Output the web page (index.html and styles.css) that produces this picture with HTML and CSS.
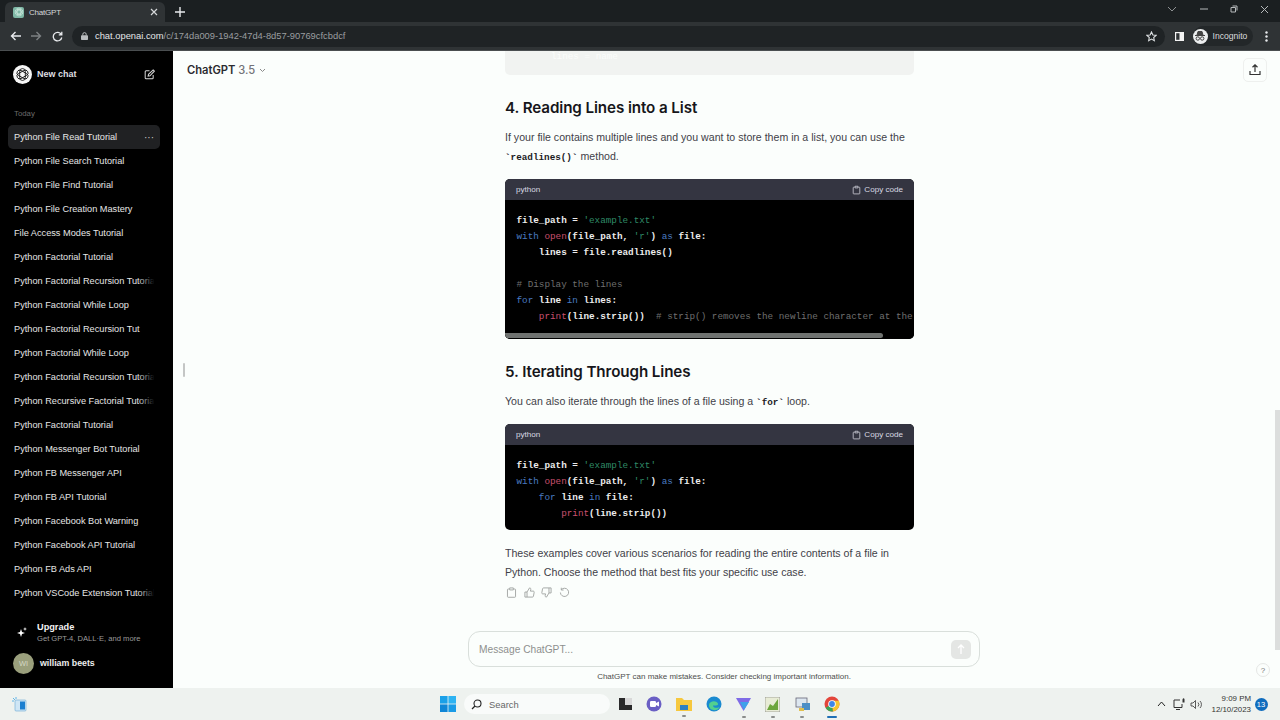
FILE: index.html
```html
<!DOCTYPE html>
<html lang="en">
<head>
<meta charset="utf-8">
<title>ChatGPT</title>
<link rel="stylesheet" href="styles.css">
</head>
<body>
<svg class="defs" width="0" height="0" aria-hidden="true">
  <symbol id="clip" viewBox="0 0 12 12"><path d="M3.5 2.2H2.4a.8.8 0 0 0-.8.8v7.4a.8.8 0 0 0 .8.8h7.2a.8.8 0 0 0 .8-.8V3a.8.8 0 0 0-.8-.8H8.5M4 1h4v2.2H4z" fill="none" stroke="currentColor" stroke-width="1"/></symbol>
  <symbol id="knot" viewBox="0 0 24 24"><g fill="none" stroke="currentColor" stroke-width="1.4"><rect x="7.5" y="2.5" width="9" height="19" rx="4.5"/><rect x="7.5" y="2.5" width="9" height="19" rx="4.5" transform="rotate(60 12 12)"/><rect x="7.5" y="2.5" width="9" height="19" rx="4.5" transform="rotate(120 12 12)"/></g></symbol>
</svg>

<header class="tabstrip">
  <div class="tab">
    <span class="favicon"><svg width="10" height="10"><use href="#knot"/></svg></span>
    <span class="tab-title">ChatGPT</span>
    <svg class="tab-close" width="8" height="8" viewBox="0 0 8 8"><path d="M1 1l6 6M7 1L1 7" stroke="currentColor" stroke-width="1.2"/></svg>
  </div>
  <svg class="newtab" width="10" height="10" viewBox="0 0 10 10"><path d="M5 0v10M0 5h10" stroke="currentColor" stroke-width="1.4"/></svg>
  <div class="winctl">
    <svg width="10" height="6" viewBox="0 0 10 6"><path d="M1 1l4 4 4-4" fill="none" stroke="currentColor"/></svg>
    <svg width="8" height="2" viewBox="0 0 8 2"><path d="M0 1h8" stroke="currentColor"/></svg>
    <svg width="8" height="8" viewBox="0 0 8 8"><path d="M1 2.500h4.500v4.500H1zM2.500 1H7v4.500" fill="none" stroke="currentColor"/></svg>
    <svg width="9" height="9" viewBox="0 0 9 9"><path d="M1 1l7 7M8 1L1 8" stroke="currentColor"/></svg>
  </div>
</header>

<nav class="toolbar">
  <svg class="nav" width="11" height="10" viewBox="0 0 11 10"><path d="M11 5H1.500M5.500 1L1.500 5l4 4" fill="none" stroke="currentColor" stroke-width="1.400"/></svg>
  <svg class="nav nav-off" width="11" height="10" viewBox="0 0 11 10"><path d="M0 5h9.500M5.500 1l4 4-4 4" fill="none" stroke="currentColor" stroke-width="1.400"/></svg>
  <svg class="nav nav-last" width="11" height="11" viewBox="0 0 11 11"><path d="M9.300 3.400A4.300 4.300 0 1 0 9.800 6.500M9.800 .8v3H6.800" fill="none" stroke="currentColor" stroke-width="1.300"/></svg>
  <div class="urlbar">
    <svg class="lock" width="7" height="8" viewBox="0 0 7 8"><path d="M1.800 3.500V2.300a1.700 1.700 0 0 1 3.400 0v1.200" fill="none" stroke="currentColor"/><rect y="3.200" width="7" height="4.800" rx=".8" fill="currentColor"/></svg>
    <span class="url"><b>chat.openai.com</b>/c/174da009-1942-47d4-8d57-90769cfcbdcf</span>
    <svg class="star" width="11" height="11" viewBox="0 0 12 12"><path d="M6 1l1.500 3.300 3.500.4-2.600 2.400.7 3.500L6 8.800l-3.100 1.800.7-3.500L1 4.700l3.500-.4z" fill="none" stroke="currentColor" stroke-width="1.200"/></svg>
  </div>
  <svg class="panel" width="9" height="9" viewBox="0 0 9 9"><path d="M0 0h9v9H0z" fill="#f4f4f4"/><path d="M1.200 1.200h3.300v6.600H1.200z" fill="#2f3335"/></svg>
  <div class="incog">
    <span class="incog-icon"><svg width="12" height="12" viewBox="0 0 12 12"><path d="M1 5.500h10M3 5l1-3.500h4L9 5" fill="#444" stroke="#444"/><circle cx="3.800" cy="8.500" r="1.700" fill="none" stroke="#444"/><circle cx="8.200" cy="8.500" r="1.700" fill="none" stroke="#444"/></svg></span>
    <span>Incognito</span>
  </div>
  <svg class="kebab" width="3" height="11" viewBox="0 0 3 11"><circle cx="1.500" cy="1.500" r="1.200" fill="currentColor"/><circle cx="1.500" cy="5.500" r="1.200" fill="currentColor"/><circle cx="1.500" cy="9.500" r="1.200" fill="currentColor"/></svg>
</nav>

<div class="app">
  <aside class="sidebar">
    <div class="newchat">
      <span class="logo"><svg width="15" height="15"><use href="#knot"/></svg></span>
      <span class="newchat-label">New chat</span>
      <svg class="edit" width="11" height="11" viewBox="0 0 12 12"><path d="M6 2H2.300a1 1 0 0 0-1 1v6.700a1 1 0 0 0 1 1H9a1 1 0 0 0 1-1V6.500M4.500 7.800l.4-2L10 1l1.300 1.300-4.800 5.100z" fill="none" stroke="currentColor" stroke-width="1.100"/></svg>
    </div>
    <div class="today">Today</div>
    <ul class="chats">
      <li class="chat active"><span>Python File Read Tutorial</span><em>···</em></li>
      <li class="chat"><span>Python File Search Tutorial</span></li>
      <li class="chat"><span>Python File Find Tutorial</span></li>
      <li class="chat"><span>Python File Creation Mastery</span></li>
      <li class="chat"><span>File Access Modes Tutorial</span></li>
      <li class="chat"><span>Python Factorial Tutorial</span></li>
      <li class="chat fade"><span>Python Factorial Recursion Tutorial</span></li>
      <li class="chat"><span>Python Factorial While Loop</span></li>
      <li class="chat"><span>Python Factorial Recursion Tut</span></li>
      <li class="chat"><span>Python Factorial While Loop</span></li>
      <li class="chat fade"><span>Python Factorial Recursion Tutorial</span></li>
      <li class="chat fade"><span>Python Recursive Factorial Tutorial</span></li>
      <li class="chat"><span>Python Factorial Tutorial</span></li>
      <li class="chat"><span>Python Messenger Bot Tutorial</span></li>
      <li class="chat"><span>Python FB Messenger API</span></li>
      <li class="chat"><span>Python FB API Tutorial</span></li>
      <li class="chat"><span>Python Facebook Bot Warning</span></li>
      <li class="chat"><span>Python Facebook API Tutorial</span></li>
      <li class="chat"><span>Python FB Ads API</span></li>
      <li class="chat fade"><span>Python VSCode Extension Tutorial</span></li>
    </ul>
    <div class="upgrade">
      <svg class="spark" width="10" height="10" viewBox="0 0 10 10"><path d="M4 2l1 3 3 1-3 1-1 3-1-3-3-1 3-1zM8 0l.5 1.500L10 2l-1.500.5L8 4l-.5-1.500L6 2l1.500-.5z" fill="#fff"/></svg>
      <div class="upgrade-text"><strong>Upgrade</strong><small>Get GPT-4, DALL·E, and more</small></div>
    </div>
    <div class="user"><span class="avatar">WI</span><span class="username">william beets</span></div>
  </aside>

  <main class="main">
    <div class="topbar">
      <div class="model">ChatGPT <span>3.5</span>
        <svg width="7" height="5" viewBox="0 0 7 5"><path d="M1 1l2.500 2.500L6 1" fill="none" stroke="currentColor"/></svg>
      </div>
      <button class="share" type="button"><svg width="12" height="12" viewBox="0 0 12 12"><path d="M6 8V1M3.500 3.200L6 .8l2.500 2.400M1 7v3.500h10V7" fill="none" stroke="currentColor" stroke-width="1.200"/></svg></button>
    </div>
    <span class="handle"></span>
    <span class="thumb"></span>
    <button class="help" type="button">?</button>

    <div class="thread">
      <div class="ghost"><span>lines = name</span></div>
      <h3>4. Reading Lines into a List</h3>
      <p>If your file contains multiple lines and you want to store them in a list, you can use the <code>`readlines()`</code> method.</p>
      <div class="code">
        <div class="code-head"><span>python</span><span class="copy"><svg width="9" height="10"><use href="#clip"/></svg>Copy code</span></div>
        <pre class="code-body"><span class="s-white">file_path = </span><span class="s-str">'example.txt'</span>
<span class="s-kw">with</span> <span class="s-fn">open</span><span class="s-white">(file_path, </span><span class="s-str">'r'</span><span class="s-white">)</span> <span class="s-kw">as</span> <span class="s-white">file:
    lines = file.readlines()</span>

<span class="s-com"># Display the lines</span>
<span class="s-kw">for</span> <span class="s-white">line</span> <span class="s-kw">in</span> <span class="s-white">lines:
    </span><span class="s-fn">print</span><span class="s-white">(line.strip())</span>  <span class="s-com"># strip() removes the newline character at the end</span></pre>
        <div class="hscroll"><span></span></div>
      </div>
      <h3>5. Iterating Through Lines</h3>
      <p>You can also iterate through the lines of a file using a <code>`for`</code> loop.</p>
      <div class="code">
        <div class="code-head"><span>python</span><span class="copy"><svg width="9" height="10"><use href="#clip"/></svg>Copy code</span></div>
        <pre class="code-body short"><span class="s-white">file_path = </span><span class="s-str">'example.txt'</span>
<span class="s-kw">with</span> <span class="s-fn">open</span><span class="s-white">(file_path, </span><span class="s-str">'r'</span><span class="s-white">)</span> <span class="s-kw">as</span> <span class="s-white">file:
    </span><span class="s-kw">for</span> <span class="s-white">line</span> <span class="s-kw">in</span> <span class="s-white">file:
        </span><span class="s-fn">print</span><span class="s-white">(line.strip())</span></pre>
      </div>
      <p class="closing">These examples cover various scenarios for reading the entire contents of a file in Python. Choose the method that best fits your specific use case.</p>
      <div class="actions">
        <svg width="11" height="11"><use href="#clip"/></svg>
        <svg width="11" height="11" viewBox="0 0 12 12"><path d="M1 5.500h2.300V11H1zM3.300 5.500L6 1c1.200 0 1.600.8 1.400 1.800L7 4.500h3.200c.7 0 1 .6.900 1.200l-.8 4.300c-.1.600-.5 1-1.100 1H3.300" fill="none" stroke="currentColor"/></svg>
        <svg width="11" height="11" viewBox="0 0 12 12"><path d="M11 6.500H8.700V1H11zM8.700 6.500L6 11c-1.200 0-1.600-.8-1.400-1.800L5 7.500H1.800c-.7 0-1-.6-.9-1.200l.8-4.300c.1-.6.500-1 1.100-1h5.900" fill="none" stroke="currentColor"/></svg>
        <svg width="11" height="11" viewBox="0 0 12 12"><path d="M2.500 3A4.500 4.500 0 1 1 1.500 6M2.500 .8V3.300H5" fill="none" stroke="currentColor"/></svg>
      </div>
    </div>

    <div class="composer">
      <span class="placeholder">Message ChatGPT...</span>
      <span class="send"><svg width="8" height="10" viewBox="0 0 8 10"><path d="M4 10V1M1 4l3-3 3 3" fill="none" stroke="#fff" stroke-width="1.300"/></svg></span>
    </div>
    <div class="disclaimer">ChatGPT can make mistakes. Consider checking important information.</div>
  </main>
</div>

<footer class="taskbar">
  <svg class="widgets" width="16" height="15" viewBox="0 0 16 15"><rect x="3" y="3" width="11" height="11" rx="1" fill="#cfe6f5" stroke="#6aa9d4" stroke-width=".6"/><rect x="8" y="4.500" width="5" height="8" fill="#1b7fd0"/><path d="M1 1l2 2M4 0v2M0 4h2" stroke="#3ba4e6" stroke-width=".8"/></svg>
  <div class="task-center">
    <svg width="16" height="16" viewBox="0 0 16 16"><path d="M0 0h7.600v7.600H0z" fill="#1aa0e8"/><path d="M8.400 0H16v7.600H8.400z" fill="#2eb3f2"/><path d="M0 8.400h7.600V16H0z" fill="#0f86d6"/><path d="M8.400 8.400H16V16H8.400z" fill="#1a9be6"/></svg>
    <div class="search">
      <svg width="11" height="11" viewBox="0 0 11 11"><circle cx="6.500" cy="4.500" r="3.500" fill="none" stroke="#222" stroke-width="1.100"/><path d="M4 7L1 10" stroke="#222" stroke-width="1.200"/></svg>
      <span>Search</span>
    </div>
    <div class="apps">
      <span class="app-i"><svg width="13" height="12" viewBox="0 0 13 12"><rect width="13" height="12" fill="#2a2a2a"/><path d="M6 0h7v7H6z" fill="#d8d8d8"/></svg></span>
      <span class="app-i"><svg width="16" height="16" viewBox="0 0 16 16"><circle cx="8" cy="8" r="7.500" fill="#6a5fc4"/><rect x="4" y="5" width="6" height="6" rx="1.200" fill="#fff"/><path d="M10 7l3-1.500v5L10 9z" fill="#fff"/></svg></span>
      <span class="app-i on"><svg width="16" height="14" viewBox="0 0 16 14"><path d="M0 1h6l2 2h8v11H0z" fill="#f6c83e"/><path d="M4 8h8v5H4z" fill="#2d7fc1"/></svg></span>
      <span class="app-i"><svg width="16" height="16" viewBox="0 0 16 16"><circle cx="8" cy="8" r="7.500" fill="#1a8ad0"/><path d="M3 9c.5-4 7-5 9-1.500.4 1-.6 2-2 2H7c0 2.500 4 3 6.500 1.500C11.500 16 3 15 3 9z" fill="#52d08f"/></svg></span>
      <span class="app-i on"><svg width="15" height="15" viewBox="0 0 15 15"><path d="M0 1h15L7.500 14z" fill="#7f6be6"/><path d="M4 5h9l-5 8z" fill="#3fa2ea"/></svg></span>
      <span class="app-i on"><svg width="15" height="15" viewBox="0 0 15 15"><rect width="15" height="15" fill="#e8ecd6" stroke="#777" stroke-width=".6"/><path d="M2 13l3-6 3 2 5-7v11z" fill="#6da63d"/></svg></span>
      <span class="app-i on"><svg width="15" height="15" viewBox="0 0 15 15"><rect x="1" y="1" width="11" height="9" fill="#dde7f0" stroke="#667" stroke-width=".8"/><path d="M7 6h8v7H7z" fill="#4c8fc6"/><path d="M4 11h5v3H4z" fill="#e0c050"/></svg></span>
      <span class="app-i run"><svg width="16" height="16" viewBox="0 0 16 16"><circle cx="8" cy="8" r="7.500" fill="#e3463b"/><path d="M8 8L1.500 11.800A7.500 7.500 0 0 0 9 15.400z" fill="#3aa655"/><path d="M8 8l1 7.400A7.500 7.500 0 0 0 14.800 4.800H8z" fill="#f7c531"/><circle cx="8" cy="8" r="3.800" fill="#fff"/><circle cx="8" cy="8" r="2.900" fill="#3f86e8"/></svg></span>
    </div>
  </div>
  <div class="tray">
    <svg class="t-up" width="9" height="6" viewBox="0 0 9 6"><path d="M1 5l3.500-4L8 5" fill="none" stroke="#222"/></svg>
    <svg class="t-net" width="13" height="12" viewBox="0 0 13 12"><path d="M7 2H1v7.500h8V6M3 11.500h4" fill="none" stroke="#333"/><path d="M10 .5a1 1 0 0 1 1.500 1v3H9.500v-3z" fill="#333"/></svg>
    <svg width="13" height="11" viewBox="0 0 13 11"><path d="M1 4h2l2.500-2.500v8L3 7H1zM8 3.500a3 3 0 0 1 0 4M10 2a5 5 0 0 1 0 7" fill="none" stroke="#333" stroke-width=".8"/></svg>
    <div class="clock"><span>9:09 PM</span><span>12/10/2023</span></div>
    <span class="badge">13</span>
  </div>
</footer>
</body>
</html>
```

FILE: styles.css
```css
* { box-sizing: border-box; }
html, body { height: 100%; }
body {
  margin: 0;
  width: 1280px;
  height: 720px;
  overflow: hidden;
  display: flex;
  flex-direction: column;
  font-family: "Liberation Sans", Arial, sans-serif;
  background: #fbfefc;
}
.defs { position: absolute; }
ul { list-style: none; margin: 0; padding: 0; }

/* browser chrome */
.tabstrip {
  height: 22px;
  flex: none;
  background: #1b1f21;
  color: #e8eaed;
  display: flex;
  align-items: center;
  padding: 2px 0 0 5px;
}
.tab {
  width: 160px;
  height: 20px;
  background: #2f3335;
  border-radius: 6px 6px 0 0;
  display: flex;
  align-items: center;
  padding: 0 7px 0 8px;
  font-size: 8px;
  letter-spacing: -.2px;
  color: #d5d8da;
}
.favicon {
  width: 11px;
  height: 11px;
  border-radius: 2px;
  background: #7fb8a6;
  color: #d8efe6;
  display: flex;
  align-items: center;
  justify-content: center;
  margin-right: 5px;
}
.tab-title { flex: 1; }
.newtab { margin-left: 10px; }
.winctl {
  margin-left: auto;
  display: flex;
  align-items: center;
  gap: 22px;
  padding-right: 11px;
  color: #b6b9bb;
  margin-top: -6px;
}
.winctl svg:first-child { margin-right: 1px; color: #8d9092; }

.toolbar {
  height: 29px;
  flex: none;
  background: #2f3335;
  color: #e8eaed;
  display: flex;
  align-items: center;
  padding: 0 0 0 10px;
  border-bottom: 1px solid #4a4e50;
}
.nav { margin-right: 10px; flex: none; }
.nav-off { color: #7d8183; }
.nav-last { margin-right: 9px; }
.urlbar {
  width: 1093px;
  height: 21px;
  border-radius: 11px;
  background: #1f2325;
  display: flex;
  align-items: center;
  padding: 0 8px 0 9px;
  font-size: 9.35px;
}
.lock { color: #b9bcbe; margin-right: 7px; flex: none; }
.url { color: #9a9ea0; flex: 1; }
.url b { color: #e3e5e7; font-weight: 400; }
.star { color: #dcdfe1; }
.panel { margin-left: 9.5px; margin-right: 9px; flex: none; }
.incog {
  display: flex;
  align-items: center;
  font-size: 8.6px;
  color: #d9dbdd;
  background: #232729;
  border-radius: 10px;
  height: 20px;
  width: 60px;
  flex: none;
}
.incog-icon {
  width: 15px;
  height: 15px;
  border-radius: 50%;
  background: #eceeef;
  display: flex;
  align-items: center;
  justify-content: center;
  margin-right: 5px;
  flex: none;
}
.kebab { margin-left: 12.5px; flex: none; }

/* app */
.app { flex: 1; display: flex; min-height: 0; }
.sidebar {
  width: 173px;
  flex: none;
  background: #000;
  color: #ececf1;
  display: flex;
  flex-direction: column;
  padding: 0 13px 0 8px;
}
.newchat {
  display: flex;
  align-items: center;
  height: 20px;
  margin-top: 13px;
  padding: 0 4px 0 5px;
}
.logo {
  width: 19px;
  height: 19px;
  border-radius: 50%;
  background: #f6f6f6;
  color: #111;
  display: flex;
  align-items: center;
  justify-content: center;
  margin-right: 5px;
}
.newchat-label { flex: 1; font-size: 9px; font-weight: 700; color: #dedee0; }
.edit { color: #d8d8d8; margin-right: 1px; }
.today {
  margin-top: 25px;
  padding-left: 6px;
  font-size: 7.8px;
  line-height: 10px;
  color: #6a6a6a;
}
.chats { margin-top: 6px; flex: 1; }
.chat {
  position: relative;
  height: 24px;
  padding: 0 6px;
  display: flex;
  align-items: center;
  font-size: 9.2px;
  white-space: nowrap;
  overflow: hidden;
  border-radius: 5px;
  color: #e6e6e6;
}
.chat span { flex: 1; }
.chat em { font-style: normal; color: #c8c8c8; font-size: 10px; }
.chat.active { background: #202123; }
.fade::after {
  content: "";
  position: absolute;
  right: 0;
  top: 0;
  bottom: 0;
  width: 22px;
  background: linear-gradient(to right, rgba(0,0,0,0), #000 75%);
}
.upgrade { display: flex; align-items: center; height: 24px; padding-left: 9px; margin-bottom: 8px; }
.spark { margin-right: 10px; }
.upgrade-text { display: flex; flex-direction: column; }
.upgrade-text strong { font-size: 9.2px; font-weight: 700; line-height: 12px; color: #f2f2f2; }
.upgrade-text small { font-size: 7.6px; line-height: 11px; color: #9c9c9c; }
.user { display: flex; align-items: center; height: 22px; padding-left: 5px; margin-bottom: 14px; }
.avatar {
  width: 21px;
  height: 21px;
  border-radius: 50%;
  background: #9a9f7c;
  color: #d5d8c4;
  font-size: 7.5px;
  display: flex;
  align-items: center;
  justify-content: center;
  margin-right: 6px;
}
.username { font-size: 8.8px; font-weight: 700; color: #eee; }

/* main */
.main {
  position: relative;
  flex: 1;
  min-width: 0;
  display: flex;
  flex-direction: column;
  background: #fbfefc;
  color: #353740;
}
.topbar {
  position: absolute;
  left: 14px;
  right: 13px;
  top: 6px;
  display: flex;
  align-items: flex-start;
  justify-content: space-between;
}
.model { font-family: Inter, sans-serif; font-size: 11.2px; font-weight: 600; color: #2b2b2f; line-height: 26px; }
.model span { color: #737378; font-weight: 500; }
.model svg { color: #8a8a8a; margin-left: 1px; vertical-align: 1px; }
.share {
  width: 24px;
  height: 24px;
  margin-top: 1px;
  border: 1px solid #eef0ee;
  border-radius: 5px;
  background: #fbfefc;
  color: #333;
  padding: 0;
  display: flex;
  align-items: center;
  justify-content: center;
}
.handle {
  position: absolute;
  left: 10px;
  top: 312px;
  width: 2px;
  height: 14px;
  background: #c4c6c5;
  border-radius: 1px;
}
.thumb {
  position: absolute;
  right: 0;
  top: 359px;
  width: 5px;
  height: 240px;
  background: #dcdedd;
}
.help {
  position: absolute;
  right: 10px;
  bottom: 11px;
  width: 14px;
  height: 14px;
  border-radius: 50%;
  border: 1px solid #e5e7e5;
  background: #fbfefc;
  color: #777;
  font-size: 8px;
  padding: 0;
}

.thread {
  flex: 1;
  min-height: 0;
  width: 409px;
  margin-left: 332px;
  overflow: hidden;
}
.ghost {
  height: 24px;
  background: #f1f3f1;
  border-radius: 0 0 5px 5px;
  padding-left: 46px;
  font: 9.3px/12px "Liberation Mono", monospace;
  color: #fbfdfb;
}
.thread h3 {
  margin: 22.5px 0 10px;
  font-family: Inter, sans-serif;
  font-size: 15.2px;
  font-weight: 600;
  line-height: 20px;
  letter-spacing: -.1px;
  color: #16161a;
}
.thread p {
  margin: 0;
  font-size: 10.6px;
  line-height: 19px;
  color: #3f4148;
}
.thread code {
  font: 700 9.3px/1 "Liberation Mono", monospace;
  color: #1c1c1f;
}
.code {
  margin-top: 13.5px;
  border-radius: 5px;
  overflow: hidden;
  background: #000;
}
.code-head {
  height: 21px;
  background: #343541;
  color: #d9d9e3;
  display: flex;
  align-items: center;
  justify-content: space-between;
  padding: 0 11px;
  font-size: 8.1px;
}
.copy { display: flex; align-items: center; gap: 3px; }
.code-body {
  margin: 0;
  height: 133px;
  padding: 12.5px 0 0 11.5px;
  font: 9.3px/16px "Liberation Mono", monospace;
  white-space: pre;
  overflow: hidden;
  color: #fff;
}
.code-body.short { height: 85px; }
.s-white { color: #ececec; font-weight: 700; }
.s-str { color: #2f8a66; }
.s-kw { color: #4a7bc0; }
.s-fn { color: #c9506f; }
.s-com { color: #6f6f6f; }
.hscroll { height: 6px; background: #000; }
.hscroll span { display: block; width: 378px; height: 5px; background: #6f7270; border-radius: 0 3px 3px 0; }
.thread p.closing { margin-top: 13.5px; }
.actions {
  margin-top: 5px;
  padding-left: 1px;
  display: flex;
  gap: 6.500px;
  color: #a0a3a1;
}

.composer {
  flex: none;
  margin-left: 295px;
  width: 512px;
  height: 36px;
  border: 1px solid #d9dfdb;
  border-radius: 12px;
  display: flex;
  align-items: center;
  justify-content: space-between;
  padding: 0 8px 0 10px;
  font-size: 10.2px;
  color: #8e908e;
}
.send {
  width: 20px;
  height: 19px;
  border-radius: 5px;
  background: #e4e6e4;
  display: flex;
  align-items: center;
  justify-content: center;
}
.disclaimer {
  flex: none;
  margin-left: 295px;
  width: 512px;
  height: 21px;
  line-height: 20px;
  text-align: center;
  font-size: 8px;
  color: #4d4f4d;
}

/* taskbar */
.taskbar {
  height: 32px;
  flex: none;
  background: #eef2ef;
  display: flex;
  align-items: center;
  padding-left: 12px;
}
.task-center { display: flex; align-items: center; margin-left: 412px; }
.search {
  width: 146px;
  height: 20px;
  margin-left: 8px;
  border-radius: 10px;
  background: #f9fbfa;
  display: flex;
  align-items: center;
  padding-left: 7px;
  gap: 7px;
  font-size: 9.400px;
  color: #666;
}
.apps { display: flex; align-items: center; margin-left: 9px; gap: 14.100px; }
.app-i { position: relative; display: flex; }
.on::after, .run::after {
  content: "";
  position: absolute;
  left: 50%;
  bottom: -6px;
  width: 4px;
  height: 2px;
  margin-left: -2px;
  border-radius: 1px;
  background: #8a8d8b;
}
.run::after { width: 10px; margin-left: -5px; background: #1f6fb5; }
.tray { margin-left: auto; display: flex; align-items: center; color: #333; }
.t-up { margin-right: 7px; }
.t-net { margin-right: 4px; }
.clock {
  display: flex;
  flex-direction: column;
  align-items: flex-end;
  width: 40px;
  margin-left: 8.500px;
  font-size: 7.900px;
  line-height: 11px;
  color: #333;
}
.badge {
  width: 13px;
  height: 13px;
  margin: 0 12.500px 0 3.500px;
  border-radius: 50%;
  background: #0f6cbd;
  color: #fff;
  font-size: 7.500px;
  display: flex;
  align-items: center;
  justify-content: center;
}
```
